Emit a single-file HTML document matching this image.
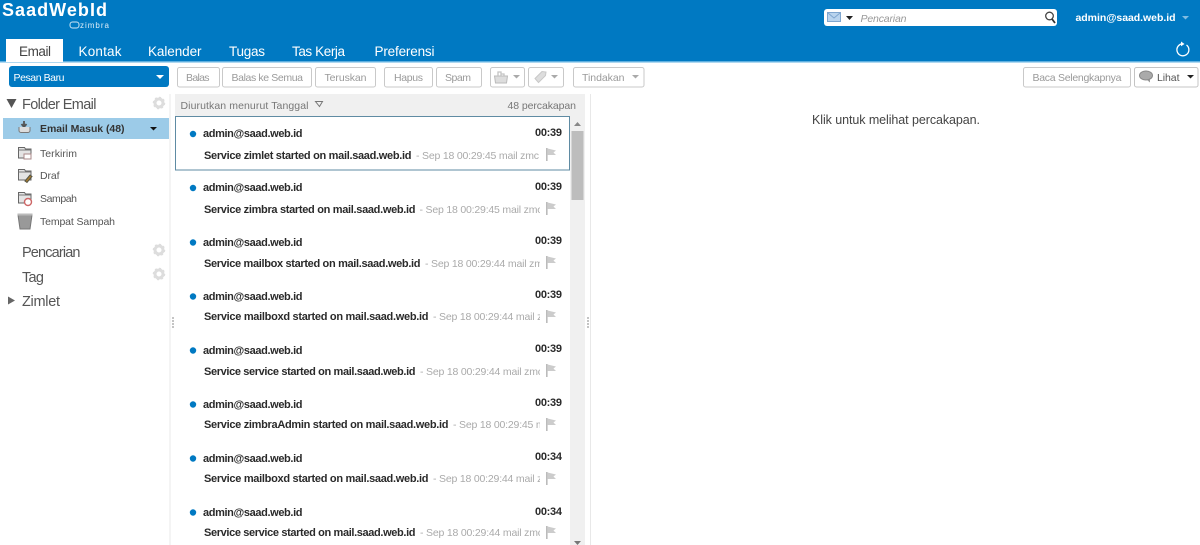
<!DOCTYPE html>
<html><head><meta charset="utf-8"><style>
html,body{margin:0;padding:0;background:#fff;width:1200px;height:545px;overflow:hidden}
svg{display:block;font-family:"Liberation Sans",sans-serif;filter:blur(.3px)}
.b{fill:#fff;stroke:#c9c9c9}
.t{fill:#9a9a9a;font-size:10.5px}
.n{fill:#fff;font-size:13.5px}
.f{fill:#555;font-size:10.5px}
.h{fill:#555;font-size:14.5px}
.s{fill:#2a2a2a;font-size:11px;font-weight:bold}
.p{fill:#aaa;font-size:10.5px}
</style></head><body>
<svg width="1200" height="545" viewBox="0 0 1200 545" xmlns="http://www.w3.org/2000/svg">
<defs>
<clipPath id="c"><rect x="175" y="116" width="365" height="429"/></clipPath>
<g id="flag"><path d="M0 0h1.6v13H0z" fill="#bbb"/><path d="M1.600 .5 10 2.500 7.500 4.500 10 7 1.600 7z" fill="#ccc"/></g>
<g id="gear"><circle r="4" fill="none" stroke="#ddd" stroke-width="3"/><circle r="5.500" fill="none" stroke="#ddd" stroke-width="1.500" stroke-dasharray="2 2.300"/></g>
<g id="fold"><path d="M.5 2.500V1.500h6l1 1.500h5.500v9H.5z" fill="#e4e4e4" stroke="#666"/><path d="M.5 4h12.500" stroke="#777"/></g>
</defs>
<rect width="1200" height="61" fill="#0079c2"/>
<rect y="61" width="1200" height="1.500" fill="#5fb0e0"/>
<text x="2" y="16" fill="#fff" font-size="18" font-weight="bold" textLength="105">SaadWebId</text>
<rect x="70" y="22" width="9" height="6" rx="2.500" fill="none" stroke="#cfe6f5"/>
<text x="80" y="28" fill="#dcedf8" font-size="8" textLength="29">zimbra</text>
<path d="M6 62V39H63V62z" fill="#fff"/>
<text x="19" y="56" fill="#444" font-size="13.500" textLength="32">Email</text>
<text class="n" x="78.500" y="56" textLength="43">Kontak</text>
<text class="n" x="148" y="56" textLength="53.500">Kalender</text>
<text class="n" x="229" y="56" textLength="36">Tugas</text>
<text class="n" x="292" y="56" textLength="53">Tas Kerja</text>
<text class="n" x="374.500" y="56" textLength="60">Preferensi</text>
<rect x="824" y="9" width="233" height="17" rx="3" fill="#fff"/>
<rect x="827.500" y="12.500" width="13" height="9" fill="#b9d4ee" stroke="#7fa6cf"/><path d="M828 13l6 5 6-5" fill="none" stroke="#7fa6cf"/>
<path d="M846 16h7l-3.500 4z" fill="#222"/>
<text x="860.500" y="22" fill="#999" font-size="10.500" font-style="italic" textLength="46">Pencarian</text>
<circle cx="1049.500" cy="16" r="3.800" fill="none" stroke="#444" stroke-width="1.300"/><path d="M1052 19l3 4" stroke="#333" stroke-width="1.800"/>
<text x="1075.500" y="21" fill="#fff" font-size="10.500" font-weight="bold" textLength="100">admin@saad.web.id</text>
<path d="M1182 16h7l-3.500 3.500z" fill="#80bce2"/>
<path d="M1186.500 45a6 6 0 1 1-3.500-1.200" fill="none" stroke="#fff" stroke-width="1.300"/><path d="M1181 41.500l3.500 2.500-3.500 2.200z" fill="#fff"/>

<rect x="9" y="66" width="160" height="21" rx="3" fill="#0079c2"/>
<text x="13.500" y="81" fill="#fff" font-size="10.500" textLength="51">Pesan Baru</text>
<path d="M156 75h8l-4 4z" fill="#fff"/>
<rect class="b" x="177.500" y="67.500" width="42" height="19.500" rx="2"/><text class="t" x="186" y="81" textLength="23.500">Balas</text>
<rect class="b" x="222.500" y="67.500" width="89" height="19.500" rx="2"/><text class="t" x="231.500" y="81" textLength="71.500">Balas ke Semua</text>
<rect class="b" x="315.500" y="67.500" width="60" height="19.500" rx="2"/><text class="t" x="324.500" y="81" textLength="42">Teruskan</text>
<rect class="b" x="384.500" y="67.500" width="48" height="19.500" rx="2"/><text class="t" x="394" y="81" textLength="29">Hapus</text>
<rect class="b" x="436.500" y="67.500" width="45" height="19.500" rx="2"/><text class="t" x="445" y="81" textLength="26">Spam</text>
<rect class="b" x="490.500" y="67.500" width="34" height="19.500" rx="2"/>
<path d="M494.500 76h13l-1 7h-11z" fill="#ddd" stroke="#bbb"/><path d="M498 76v-4h3v4M501 74h3v2" fill="none" stroke="#c4c4c4" stroke-width="1.300"/>
<path d="M513 75h7l-3.500 3.500z" fill="#aaa"/>
<rect class="b" x="528.500" y="67.500" width="35" height="19.500" rx="2"/>
<path d="M535 78.500l7-7 4 .5-.5 3.500-7 7z" fill="#ddd" stroke="#c8c8c8"/>
<path d="M551 75h7l-3.500 3.500z" fill="#aaa"/>
<rect class="b" x="573.500" y="67.500" width="70.500" height="19.500" rx="2"/><text class="t" x="582" y="81" textLength="42.500">Tindakan</text>
<path d="M632 75h7l-3.500 3.500z" fill="#aaa"/>
<rect class="b" x="1023.500" y="67.500" width="107" height="19.500" rx="2"/><text class="t" x="1032.500" y="81" textLength="89">Baca Selengkapnya</text>
<rect x="1134.500" y="67.500" width="63.500" height="19.500" rx="2" fill="#fff" stroke="#c4c4c4"/>
<ellipse cx="1146" cy="75.500" rx="6.500" ry="4.500" fill="#aaa" stroke="#888"/><path d="M1147 80l3 2.500v-3z" fill="#999"/>
<text x="1157" y="81" fill="#555" font-size="10.500" textLength="22.500">Lihat</text>
<path d="M1187 75h7l-3.500 3.500z" fill="#222"/>

<path d="M6.500 99h10l-5 9z" fill="#555"/>
<text class="h" x="22" y="109" textLength="74.500">Folder Email</text>
<use href="#gear" x="159" y="103"/>
<rect x="3" y="118" width="166" height="21" fill="#9ccbe8"/>
<path d="M24 121v5M21.500 124l2.500 3 2.500-3" fill="none" stroke="#555" stroke-width="1.800"/><path d="M19 127v3.500a2 2 0 0 0 2 2h7a2 2 0 0 0 2-2V127" fill="#ddd" stroke="#777"/>
<text x="40" y="132" fill="#333" font-size="10.500" font-weight="bold" textLength="84.500">Email Masuk (48)</text>
<path d="M150 127h7l-3.500 3.500z" fill="#111"/>
<use href="#fold" x="18" y="146"/><rect x="24" y="154" width="7" height="5" fill="#fff" stroke="#a88"/>
<text class="f" x="40" y="157" textLength="37">Terkirim</text>
<use href="#fold" x="18" y="168"/><path d="M25 181l5-6 2 1.500-5 6z" fill="#a87b2e" stroke="#554"/>
<text class="f" x="40" y="179" textLength="19.500">Draf</text>
<use href="#fold" x="18" y="191"/><circle cx="28" cy="202" r="3.500" fill="#fff" stroke="#c66" stroke-width="1.400"/>
<text class="f" x="40" y="202" textLength="37">Sampah</text>
<path d="M18 215h14l-2 14h-10z" fill="#999" stroke="#777"/><path d="M17.500 214.500h15" stroke="#bbb" stroke-width="2"/>
<text class="f" x="40" y="225" textLength="75">Tempat Sampah</text>
<text class="h" x="22" y="257" textLength="58.500">Pencarian</text>
<use href="#gear" x="159" y="250"/>
<text class="h" x="22" y="282" textLength="22">Tag</text>
<use href="#gear" x="159" y="274"/>
<path d="M8 296.500l7 4-7 4z" fill="#666"/>
<text class="h" x="22" y="306" textLength="38">Zimlet</text>

<rect x="169.500" y="94" width="1" height="451" fill="#e8e8e8"/>
<path d="M172 318h2M172 321h2M172 324h2M172 327h2" stroke="#888"/>
<rect x="175" y="94" width="410" height="451" fill="#f0f0f0"/>
<rect x="175" y="116" width="395" height="429" fill="#fff"/>
<text x="180.500" y="109" fill="#777" font-size="10.500" textLength="128">Diurutkan menurut Tanggal</text>
<path d="M315.500 101.500h7l-3 5z" fill="none" stroke="#777"/>
<text x="507.500" y="109" fill="#777" font-size="10.500" textLength="68.500">48 percakapan</text>
<path d="M574 126h7l-3.500-4z" fill="#888"/>
<rect x="571.500" y="131" width="12" height="69" fill="#bdbdbd"/>
<path d="M574 541h7l-3.500 4z" fill="#777"/>
<rect x="590" y="94" width="1" height="451" fill="#e8e8e8"/>
<path d="M587 318h2M587 321h2M587 324h2M587 327h2" stroke="#888"/>
<rect x="175.500" y="116.500" width="394" height="53.500" fill="#fff" stroke="#5f8ba3"/>
<g clip-path="url(#c)">
<text class="p" x="416" y="159" textLength="123">- Sep 18 00:29:45 mail zmc</text>
<text class="p" x="419.500" y="213" textLength="123">- Sep 18 00:29:45 mail zmc</text>
<text class="p" x="425" y="267" textLength="123">- Sep 18 00:29:44 mail zmc</text>
<text class="p" x="433" y="320" textLength="123">- Sep 18 00:29:44 mail zmc</text>
<text class="p" x="420" y="375" textLength="123">- Sep 18 00:29:44 mail zmc</text>
<text class="p" x="453" y="428" textLength="123">- Sep 18 00:29:45 mail zmc</text>
<text class="p" x="433" y="482" textLength="123">- Sep 18 00:29:44 mail zmc</text>
<text class="p" x="420" y="536" textLength="123">- Sep 18 00:29:44 mail zmc</text>
</g>
<g fill="#0079c2"><circle cx="193" cy="134" r="3.200"/><circle cx="193" cy="188" r="3.200"/><circle cx="193" cy="242.500" r="3.200"/><circle cx="193" cy="296.500" r="3.200"/><circle cx="193" cy="350.500" r="3.200"/><circle cx="193" cy="404.500" r="3.200"/><circle cx="193" cy="458.500" r="3.200"/><circle cx="193" cy="512.500" r="3.200"/></g>
<text class="s" x="203" y="137" textLength="99.500">admin@saad.web.id</text>
<text class="s" x="203" y="191" textLength="99.500">admin@saad.web.id</text>
<text class="s" x="203" y="246" textLength="99.500">admin@saad.web.id</text>
<text class="s" x="203" y="300" textLength="99.500">admin@saad.web.id</text>
<text class="s" x="203" y="354" textLength="99.500">admin@saad.web.id</text>
<text class="s" x="203" y="408" textLength="99.500">admin@saad.web.id</text>
<text class="s" x="203" y="462" textLength="99.500">admin@saad.web.id</text>
<text class="s" x="203" y="516" textLength="99.500">admin@saad.web.id</text>
<text class="s" x="204" y="159" textLength="207.500">Service zimlet started on mail.saad.web.id</text>
<text class="s" x="204" y="213" textLength="211.500">Service zimbra started on mail.saad.web.id</text>
<text class="s" x="204" y="267" textLength="216.500">Service mailbox started on mail.saad.web.id</text>
<text class="s" x="204" y="320" textLength="224.500">Service mailboxd started on mail.saad.web.id</text>
<text class="s" x="204" y="375" textLength="211.500">Service service started on mail.saad.web.id</text>
<text class="s" x="204" y="428" textLength="244.500">Service zimbraAdmin started on mail.saad.web.id</text>
<text class="s" x="204" y="482" textLength="224.500">Service mailboxd started on mail.saad.web.id</text>
<text class="s" x="204" y="536" textLength="211.500">Service service started on mail.saad.web.id</text>
<text class="s" x="535" y="136" textLength="27">00:39</text>
<text class="s" x="535" y="190" textLength="27">00:39</text>
<text class="s" x="535" y="244" textLength="27">00:39</text>
<text class="s" x="535" y="298" textLength="27">00:39</text>
<text class="s" x="535" y="352" textLength="27">00:39</text>
<text class="s" x="535" y="406" textLength="27">00:39</text>
<text class="s" x="535" y="460" textLength="27">00:34</text>
<text class="s" x="535" y="515" textLength="27">00:34</text>
<use href="#flag" x="546" y="148"/><use href="#flag" x="546" y="202"/><use href="#flag" x="546" y="256"/><use href="#flag" x="546" y="310"/><use href="#flag" x="546" y="364"/><use href="#flag" x="546" y="418"/><use href="#flag" x="546" y="472"/><use href="#flag" x="546" y="526"/>
<text x="812" y="124" fill="#444" font-size="12.500" textLength="168">Klik untuk melihat percakapan.</text>
</svg>
</body></html>
